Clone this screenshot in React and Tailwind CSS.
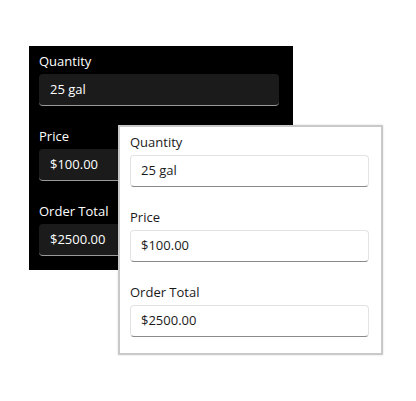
export default function App() {
  const fields = [
    ["Quantity", "25 gal"],
    ["Price", "$100.00"],
    ["Order Total", "$2500.00"],
  ];
  const font = { fontFamily: '"Open Sans", "Noto Sans", sans-serif' };
  return (
    <div className="w-[416px] h-[401px] bg-white relative" style={font}>
      <div className="absolute left-[29px] top-[46px] w-[264px] h-[224px] bg-black px-[10px] pt-[5px] flex flex-col gap-[20px]">
        {fields.map(([l, v]) => (
          <div key={l} className="flex flex-col">
            <div className="text-[13px] leading-[20px] h-[23px] text-white">{l}</div>
            <div className="h-[32px] w-[240px] rounded-[4px] bg-[#1b1b1b] border-b border-b-[#9a9a9a] flex items-center px-[11px] text-[13px] text-white">
              {v}
            </div>
          </div>
        ))}
      </div>
      <div className="absolute left-[118px] top-[125px] w-[265px] h-[230px] bg-white border-2 border-[#c9c9c9] px-[10px] pt-[5px] flex flex-col gap-[20px] shadow-[0_0_2px_rgba(0,0,0,0.15)]">
        {fields.map(([l, v]) => (
          <div key={l} className="flex flex-col">
            <div className="text-[13px] leading-[20px] h-[23px] text-[#1a1a1a]">{l}</div>
            <div className="h-[32px] w-[239px] rounded-[4px] bg-white border border-[#e3e3e3] border-b-[#8a8a8a] flex items-center px-[10px] text-[13px] text-[#1a1a1a]">
              {v}
            </div>
          </div>
        ))}
      </div>
    </div>
  );
}
